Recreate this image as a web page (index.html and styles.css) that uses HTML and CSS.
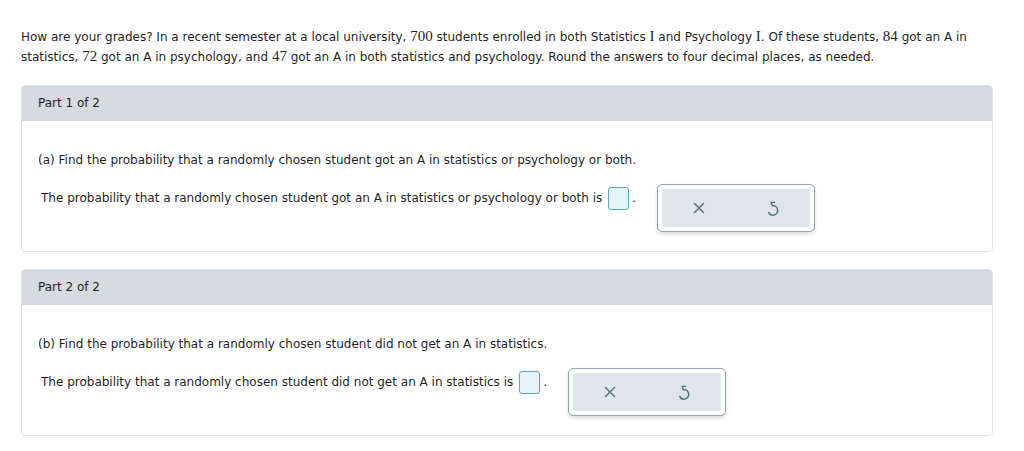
FILE: index.html
```html
<!DOCTYPE html>
<html>
<head>
<meta charset="utf-8">
<link rel="stylesheet" href="styles.css">
</head>
<body>
<div class="page">
  <p class="question">How are your grades? In a recent semester at a local university, <span class="num">700</span> students enrolled in both Statistics <span class="num">I</span> and Psychology <span class="num">I</span>. Of these students, <span class="num">84</span> got an A in statistics, <span class="num">72</span> got an A in psychology, and <span class="num">47</span> got an A in both statistics and psychology. Round the answers to four decimal places, as needed.</p>

  <section class="part">
    <div class="part-head">Part 1 of 2</div>
    <div class="part-body">
      <p class="prompt">(a) Find the probability that a randomly chosen student got an A in statistics or psychology or both.</p>
      <div class="answer-row">
        <div class="answer-line">
          <span class="answer-text">The probability that a randomly chosen student got an A in statistics or psychology or both is</span>
          <span class="answer-box"></span><span class="dot">.</span>
        </div>
        <div class="tools">
          <div class="tools-inner">
            <button class="tool"><svg width="12" height="12" viewBox="0 0 12 12"><path d="M1.5 1.5 L10.5 10.5 M10.5 1.5 L1.5 10.5" stroke="#4f6f7a" stroke-width="1.4" fill="none" stroke-linecap="round"/></svg></button>
            <button class="tool"><svg width="13" height="15" viewBox="0 0 13 15"><path d="M7.6 1.4 L4.1 1.4 L5.5 4.7" stroke="#4f6f7a" stroke-width="1.4" fill="none" stroke-linecap="round" stroke-linejoin="round"/><path d="M5.5 4.7 A4.7 4.7 0 1 1 1.7 11.4" stroke="#4f6f7a" stroke-width="1.4" fill="none" stroke-linecap="round"/></svg></button>
          </div>
        </div>
      </div>
    </div>
  </section>

  <section class="part">
    <div class="part-head">Part 2 of 2</div>
    <div class="part-body">
      <p class="prompt">(b) Find the probability that a randomly chosen student did not get an A in statistics.</p>
      <div class="answer-row">
        <div class="answer-line">
          <span class="answer-text">The probability that a randomly chosen student did not get an A in statistics is</span>
          <span class="answer-box"></span><span class="dot">.</span>
        </div>
        <div class="tools">
          <div class="tools-inner">
            <button class="tool"><svg width="12" height="12" viewBox="0 0 12 12"><path d="M1.5 1.5 L10.5 10.5 M10.5 1.5 L1.5 10.5" stroke="#4f6f7a" stroke-width="1.4" fill="none" stroke-linecap="round"/></svg></button>
            <button class="tool"><svg width="13" height="15" viewBox="0 0 13 15"><path d="M7.6 1.4 L4.1 1.4 L5.5 4.7" stroke="#4f6f7a" stroke-width="1.4" fill="none" stroke-linecap="round" stroke-linejoin="round"/><path d="M5.5 4.7 A4.7 4.7 0 1 1 1.7 11.4" stroke="#4f6f7a" stroke-width="1.4" fill="none" stroke-linecap="round"/></svg></button>
          </div>
        </div>
      </div>
    </div>
  </section>
</div>
</body>
</html>
```
FILE: styles.css
```css
html, body {
  margin: 0;
  padding: 0;
  background: #ffffff;
}
body {
  font-family: "DejaVu Sans", Verdana, sans-serif;
  font-size: 12px;
  color: #1f1f1f;
}
.page {
  padding: 27px 31px 0 21px;
}
.question {
  margin: 0 0 18px 0;
  line-height: 20px;
}
.num {
  font-family: "Liberation Serif", "Times New Roman", serif;
  font-size: 15px;
  line-height: 1;
}
.part {
  border: 1px solid #dfe4e6;
  border-radius: 4px;
  margin-bottom: 17px;
  overflow: hidden;
}
.part-head {
  background: #d3dbde;
  height: 35px;
  line-height: 35px;
  padding-left: 16px;
}
.part-body {
  padding: 29px 16px 19px 16px;
}
.prompt {
  margin: 0;
  line-height: 20px;
}
.answer-row {
  display: flex;
  align-items: flex-start;
  margin-top: 14px;
  padding-left: 3px;
  height: 48px;
}
.answer-line {
  display: flex;
  align-items: center;
  height: 24px;
  margin-top: 2px;
}
.answer-box {
  display: inline-block;
  width: 19px;
  height: 21px;
  margin-left: 6px;
  border: 1.5px solid #5aa9ba;
  border-radius: 3px;
  background: #e6f4f9;
}
.dot {
  margin-left: 3px;
  margin-right: 21px;
}
.tools {
  width: 148px;
  height: 38px;
  padding: 4px;
  border: 1px solid #8ea6ae;
  border-radius: 5px;
  background: #ffffff;
  box-shadow: 0 2px 4px rgba(0, 0, 0, 0.15);
}
.tools-inner {
  display: flex;
  height: 100%;
  background: #dfe6e9;
  border-radius: 3px;
}
.tool {
  flex: 1;
  border: none;
  background: transparent;
  padding: 0;
  display: flex;
  align-items: center;
  justify-content: center;
}
```
